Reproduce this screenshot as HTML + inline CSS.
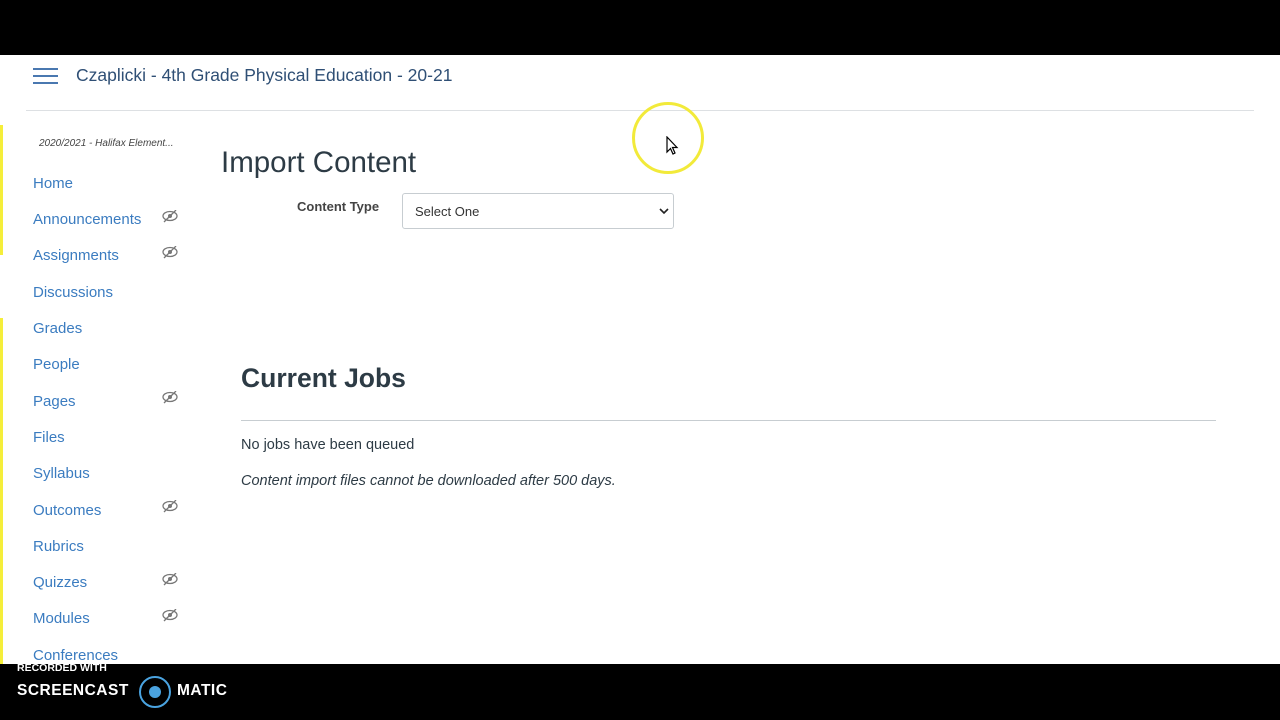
<!DOCTYPE html>
<html><head><meta charset="utf-8"><style>
body{margin:0;width:1280px;height:720px;overflow:hidden;background:#fff;font-family:"Liberation Sans",sans-serif;position:relative}
.blk{position:absolute;left:0;width:1280px;background:#000}
.a{position:absolute;white-space:nowrap}
.nav{position:absolute;left:33px;font-size:15px;color:#3b7cc0}
.eye{position:absolute;left:162px}
.yb{position:absolute;left:0;width:3px;background:#f5ee3a}
</style></head><body>
<div class="blk" style="top:0;height:55px"></div>
<div class="a" style="left:33px;top:68px;width:25px">
<div style="height:2px;background:#4a78b0;margin-bottom:5px"></div><div style="height:2px;background:#4a78b0;margin-bottom:5px"></div><div style="height:2px;background:#4a78b0"></div></div>
<div class="a" style="left:76px;top:65px;font-size:17.5px;color:#2f4f75">Czaplicki - 4th Grade Physical Education - 20-21</div>
<div class="a" style="left:26px;top:110px;width:1228px;height:1px;background:#dde0e3"></div>
<div class="yb" style="top:125px;height:130px"></div>
<div class="yb" style="top:318px;height:346px"></div>
<div class="a" style="left:39px;top:138px;font-size:10px;font-style:italic;color:#444">2020/2021 - Halifax Element...</div>
<div class="nav" style="top:175px">Home</div>
<div class="nav" style="top:211px">Announcements</div>
<div class="nav" style="top:247px">Assignments</div>
<div class="nav" style="top:284px">Discussions</div>
<div class="nav" style="top:320px">Grades</div>
<div class="nav" style="top:356px">People</div>
<div class="nav" style="top:393px">Pages</div>
<div class="nav" style="top:429px">Files</div>
<div class="nav" style="top:465px">Syllabus</div>
<div class="nav" style="top:502px">Outcomes</div>
<div class="nav" style="top:538px">Rubrics</div>
<div class="nav" style="top:574px">Quizzes</div>
<div class="nav" style="top:610px">Modules</div>
<div class="nav" style="top:647px">Conferences</div>
<svg width="0" height="0" style="position:absolute"><defs><g id="e"><ellipse cx="8" cy="6" rx="7" ry="4.5" fill="none" stroke="#777" stroke-width="1.3"/><circle cx="8" cy="6" r="2" fill="#777"/><line x1="2" y1="12" x2="14" y2="0" stroke="#777" stroke-width="1.3"/></g></defs></svg>
<svg class="eye" style="top:210px" width="16" height="13"><use href="#e"/></svg>
<svg class="eye" style="top:246px" width="16" height="13"><use href="#e"/></svg>
<svg class="eye" style="top:391px" width="16" height="13"><use href="#e"/></svg>
<svg class="eye" style="top:500px" width="16" height="13"><use href="#e"/></svg>
<svg class="eye" style="top:573px" width="16" height="13"><use href="#e"/></svg>
<svg class="eye" style="top:609px" width="16" height="13"><use href="#e"/></svg>
<div class="a" style="left:221px;top:146px;font-size:29.5px;color:#2d3b45">Import Content</div>
<div class="a" style="left:297px;top:199px;font-size:13px;font-weight:bold;color:#444">Content Type</div>
<div class="a" style="left:402px;top:193px;width:270px;height:34px;border:1px solid #c7cdd1;border-radius:3px;box-sizing:content-box"></div>
<div class="a" style="left:415px;top:204px;font-size:13px;color:#333">Select One</div>
<svg class="a" style="left:659px;top:207px" width="10" height="8"><path d="M1 2 L5 6 L9 2" fill="none" stroke="#222" stroke-width="1.6"/></svg>
<div class="a" style="left:241px;top:363px;font-size:26.5px;font-weight:bold;color:#2d3b45">Current Jobs</div>
<div class="a" style="left:241px;top:420px;width:975px;height:1px;background:#c7cdd1"></div>
<div class="a" style="left:241px;top:437px;font-size:14.5px;color:#2d3b45">No jobs have been queued</div>
<div class="a" style="left:241px;top:473px;font-size:14.5px;font-style:italic;color:#2d3b45">Content import files cannot be downloaded after 500 days.</div>
<div class="a" style="left:632px;top:102px;width:72px;height:72px;border:3px solid #f2ea3a;border-radius:50%;box-sizing:border-box"></div>
<svg class="a" style="left:666px;top:136px" width="14" height="20"><path d="M1 1 L1 16 L4.5 12.5 L7 18 L9 17 L6.5 11.5 L11 11.5 Z" fill="#fff" stroke="#000" stroke-width="1.2"/></svg>
<div class="blk" style="top:664px;height:56px"></div>
<div class="a" style="left:17px;top:662px;font-size:10.5px;font-weight:bold;color:#fff">RECORDED WITH</div>
<div class="a" style="left:17px;top:682px;font-size:15.5px;font-weight:bold;color:#fff;letter-spacing:0.5px">SCREENCAST</div>
<div class="a" style="left:139px;top:676px;width:32px;height:32px;border:2px solid #4aa3e0;border-radius:50%;box-sizing:border-box"></div>
<div class="a" style="left:149px;top:686px;width:12px;height:12px;background:#4aa3e0;border-radius:50%"></div>
<div class="a" style="left:177px;top:682px;font-size:15.5px;font-weight:bold;color:#fff;letter-spacing:0.5px">MATIC</div>
</body></html>
